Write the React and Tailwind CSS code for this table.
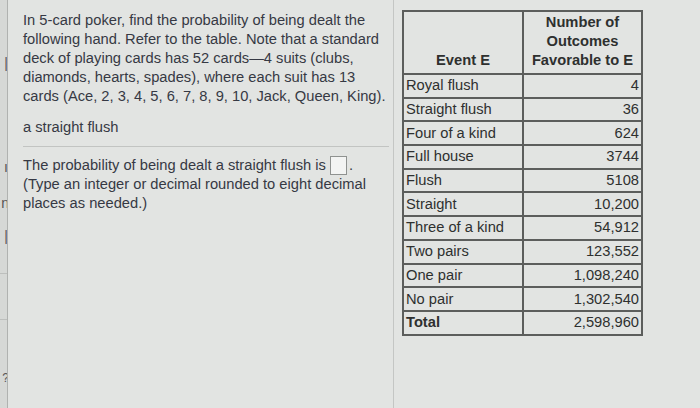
import React from 'react';

// ===== TABLE DATA =====
const rows = [
  ['Royal flush', '4'],
  ['Straight flush', '36'],
  ['Four of a kind', '624'],
  ['Full house', '3744'],
  ['Flush', '5108'],
  ['Straight', '10,200'],
  ['Three of a kind', '54,912'],
  ['Two pairs', '123,552'],
  ['One pair', '1,098,240'],
  ['No pair', '1,302,540'],
];

const font = { fontFamily: '"Liberation Sans", Arial, sans-serif' };

// ===== LEFT CLIPPED STRIP =====
const Strip = () => (
  <div className="w-[8px] shrink-0 h-full bg-[#d6d8d6] border-r border-[#b0b2b0] overflow-hidden flex flex-col items-end text-[#555] text-[14px] leading-none">
    <span className="mt-[56px] -mr-[1px]">|</span>
    <span className="mt-[90px] -mr-[1px]">ı</span>
    <span className="mt-[22px] -mr-[2px]">n</span>
    <span className="mt-[19px] -mr-[1px]">|</span>
    <div className="mt-[30px] w-full border-t border-[#bdbfbd]" />
    <div className="mt-[45px] w-full border-t border-[#bdbfbd]" />
    <span className="mt-[52px] -mr-[2px] text-[12px]">?</span>
  </div>
);

// ===== QUESTION PANEL =====
const Question = () => (
  <div className="w-[386px] shrink-0 h-full border-r border-[#c4c6c4] pl-[15px] pr-[4px] pt-[11px] text-[#363944] text-[14.7px] leading-[19px]">
    <p className="whitespace-nowrap">
      In 5-card poker, find the probability of being dealt the<br />
      following hand. Refer to the table. Note that a standard<br />
      deck of playing cards has 52 cards—4 suits (clubs,<br />
      diamonds, hearts, spades), where each suit has 13<br />
      cards (Ace, 2, 3, 4, 5, 6, 7, 8, 9, 10, Jack, Queen, King).
    </p>
    <p className="mt-[12px]">a straight flush</p>
    <div className="mt-[9px] border-t border-[#c2c4c2]" />
    <p className="mt-[9px] whitespace-nowrap flex items-center">
      The probability of being dealt a straight flush is
      <span className="inline-block w-[17px] h-[19px] ml-[4px] bg-[#f3f4f3] border border-[#8f9290]" />
      <span className="ml-[2px]">.</span>
    </p>
    <p className="whitespace-nowrap">
      (Type an integer or decimal rounded to eight decimal<br />
      places as needed.)
    </p>
  </div>
);

// ===== OUTCOMES TABLE =====
const Outcomes = () => (
  <div className="pl-[8px] pt-[10px]">
    <table className="border-collapse border-2 border-[#5c5e5c] text-[#2e302f] text-[14.7px] leading-[19px]">
      <thead>
        <tr className="h-[63px]">
          <th className="w-[120px] border-2 border-[#5c5e5c] align-bottom pb-[3px] font-bold">Event E</th>
          <th className="w-[119px] border-2 border-[#5c5e5c] align-bottom pb-[3px] font-bold">
            Number of<br />Outcomes<br />Favorable to E
          </th>
        </tr>
      </thead>
      <tbody>
        {rows.map(([e, n]) => (
          <tr key={e} className="h-[23.7px]">
            <td className="border-2 border-[#5c5e5c] pl-[2px] py-0">{e}</td>
            <td className="border-2 border-[#5c5e5c] pr-[2px] py-0 text-right">{n}</td>
          </tr>
        ))}
        <tr className="h-[23.7px]">
          <td className="border-2 border-[#5c5e5c] pl-[2px] py-0 font-bold">Total</td>
          <td className="border-2 border-[#5c5e5c] pr-[2px] py-0 text-right">2,598,960</td>
        </tr>
      </tbody>
    </table>
  </div>
);

export default function App() {
  return (
    <div style={font} className="w-[700px] h-[408px] overflow-hidden bg-[#e2e4e2] flex">
      <Strip />
      <Question />
      <Outcomes />
    </div>
  );
}
